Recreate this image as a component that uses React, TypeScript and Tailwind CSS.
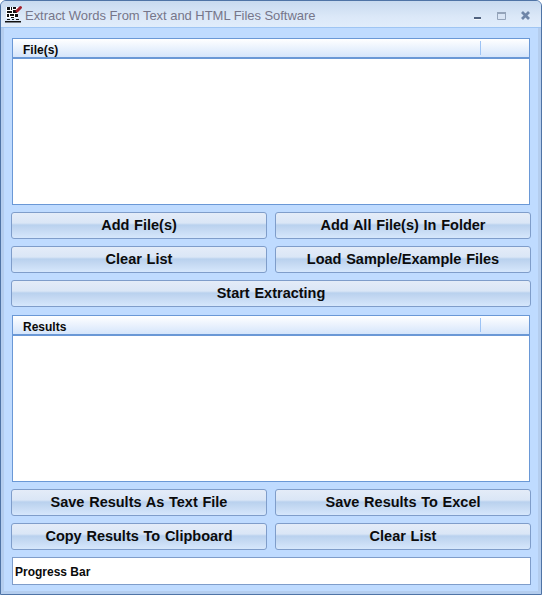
const font = "font-['Liberation_Sans',sans-serif]";

const Btn = ({ label, className = "" }: { label: string; className?: string }) => (
  <button
    className={`flex h-[27px] items-center justify-center rounded-[3px] border border-[#7f9dca] bg-[linear-gradient(#e4ecf8_0%,#dae6f6_40%,#b9d1ee_48%,#c6daf3_70%,#d6e7fc_100%)] text-[14.5px] font-bold text-[#0b0b0b] [word-spacing:0.7px] ${className}`}
  >
    {label}
  </button>
);

const ListPanel = ({ title }: { title: string }) => (
  <div className="ml-px flex h-[167px] w-[518px] flex-col border border-[#6a98d6] bg-white">
    <div className="flex h-5 items-center border-b-2 border-[#6a98d6] bg-[linear-gradient(#ffffff,#d5e5fb)]">
      <span className="ml-[10px] w-[457px] pt-[3px] text-xs font-bold text-[#0a0a0a]">{title}</span>
      <span className="h-[14px] w-px bg-[#9cc3f5]" />
    </div>
  </div>
);

const AppIcon = () => (
  <svg width="20" height="20" viewBox="0 0 20 20" className="shrink-0">
    <path fill="#fff" d="M1 3h12v11H1z" />
    <path fill="#111" d="M2 3h3v3H2zM6 3h1v3H6zM8 3h3v2H8zM2 7h5v2H2zM8 6h4v3H8zM2 10h2v3H2zM5 10h4v2H5zM10 10h3v3h-3zM6 13h3v1H6z" />
    <path fill="#111" d="M0 17h16v1.5H0zM2 15h3v1H2zM7 15h2v1H7zM11 15h3v1h-3z" />
    <path stroke="#a3202c" strokeWidth="3" strokeLinecap="round" d="M12 7l3.5-3.5" />
  </svg>
);

export default function App() {
  return (
    <div className={`flex h-[595px] w-[542px] flex-col overflow-hidden rounded-t-[6px] border border-[#4f74a6] bg-[#bfdbff] ${font}`}>
      {/* title bar */}
      <div className="flex h-[27px] shrink-0 items-center border-b border-[#9fc5f3] bg-[linear-gradient(#c8daef,#dbe8f8_60%,#e1edfb)] pl-1">
        <AppIcon />
        <span className="mt-[3px] text-[13px] tracking-[-0.04px] text-[#76768a]">Extract Words From Text and HTML Files Software</span>
        <div className="mb-auto ml-auto mt-[10px] flex items-start">
          <svg width="7" height="3" viewBox="0 0 7 3" className="mt-[6px]">
            <path fill="#50627f" d="M0 0h7v2H0z" />
            <path fill="#f4f8fd" d="M0 2h7v1H0z" />
          </svg>
          <svg width="9" height="8" viewBox="0 0 9 8" className="ml-4 mt-px">
            <path fill="#d9e5f5" stroke="#94a4ba" d="M.5.5h8v7h-8z" />
            <path fill="#94a4ba" d="M0 0h9v2H0z" />
          </svg>
          <svg width="9" height="9" viewBox="0 0 9 9" className="ml-[15px] mr-[11px]">
            <path stroke="#6f86a8" strokeWidth="2.8" d="M1 1l7 7M8 1l-7 7" />
          </svg>
        </div>
      </div>

      {/* client area inside the window frame */}
      <div className="flex min-h-0 flex-1 border-x-[3px] border-b-[3px] border-x-[#b4cdee] border-b-[#b4cdee]">
        <div className="flex flex-1 flex-col pl-[7px] pt-[10px]">
          <ListPanel title="File(s)" />
          <div className="mt-[7px] grid w-[520px] grid-cols-2 gap-x-2 gap-y-[7px]">
            <Btn label="Add File(s)" />
            <Btn label="Add All File(s) In Folder" />
            <Btn label="Clear List" />
            <Btn label="Load Sample/Example Files" />
            <Btn label="Start Extracting" className="col-span-2" />
          </div>
          <div className="mt-2">
            <ListPanel title="Results" />
          </div>
          <div className="mt-[7px] grid w-[520px] grid-cols-2 gap-x-2 gap-y-[7px]">
            <Btn label="Save Results As Text File" />
            <Btn label="Save Results To Excel" />
            <Btn label="Copy Results To Clipboard" />
            <Btn label="Clear List" />
          </div>
          <div className="ml-px mt-[7px] flex h-7 w-[519px] items-center border border-[#7f9dca] bg-white pl-[2px] pt-[2px] text-xs font-bold text-[#0a0a0a]">
            Progress Bar
          </div>
        </div>
      </div>
    </div>
  );
}
